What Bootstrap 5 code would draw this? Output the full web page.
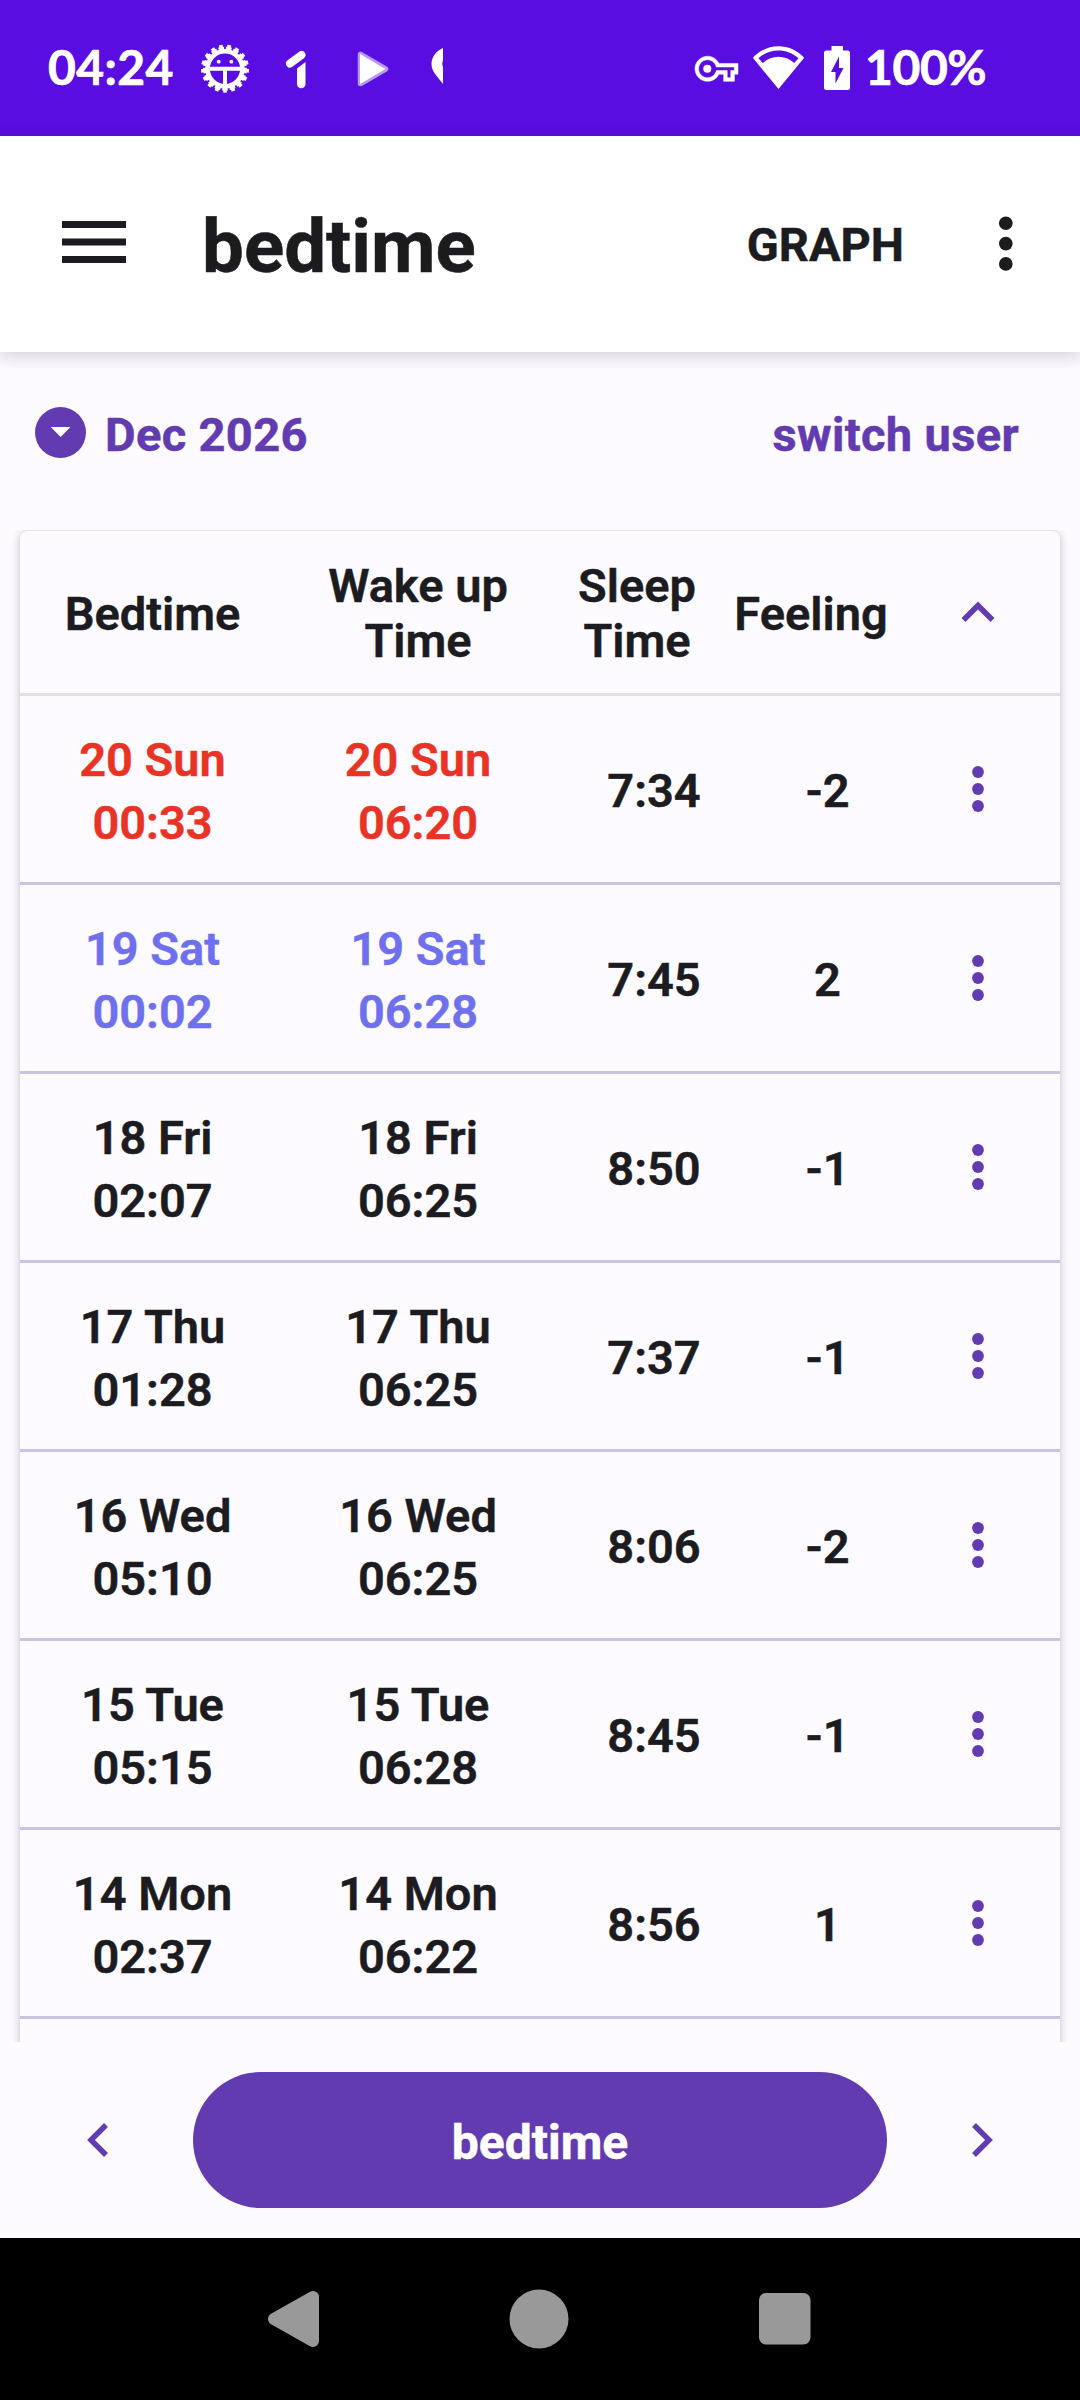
<!DOCTYPE html>
<html lang="en">
<head>
<meta charset="utf-8">
<meta name="viewport" content="width=device-width, initial-scale=1">
<title>bedtime</title>
<link href="https://cdn.jsdelivr.net/npm/bootstrap@5.3.0/dist/css/bootstrap.min.css" rel="stylesheet">
<style>
  :root { --violet: #613baf; --paper: #fdfbff; --ink: #1c1b1f; }
  body { font-family: Roboto, "Noto Sans", sans-serif; font-weight: 650; font-size: 47px; color: var(--ink); background: var(--paper); -webkit-text-stroke: .5px currentColor; }
  .screen { width: 1080px; height: 2400px; }
  svg { display: block; flex: none; }
  .status { height: 136px; background: #590de0; font-family: Lato, sans-serif; font-weight: 700; font-size: 48px; line-height: 134px; -webkit-text-stroke: .7px #fff; }
  .clock { padding-left: 48px; width: 186px; letter-spacing: .4px; }
  .level { width: 216px; padding-left: 1px; letter-spacing: -.4px; }
  .appbar { height: 216px; box-shadow: 0 4px 16px rgba(40, 30, 50, .2); z-index: 2; }
  .app-title { font-size: 74.5px; font-weight: 700; line-height: 84px; padding-left: 76px; padding-top: 6px; }
  .graph-link { font-size: 47px; font-weight: 700; color: var(--ink); padding: 2px 95px 0 0; }
  .filters { height: 178px; padding: 54px 61px 0 35px; color: var(--violet); font-size: 47px; font-weight: 700; line-height: 58px; letter-spacing: .35px; }
  .filters a, .pager a { color: inherit; }
  .viewport { height: 1512px; padding: 0 20px; }
  .log { border-radius: 8px 8px 0 0; background: var(--paper); height: 1560px; border-top: 1px solid #e6e4e8; box-shadow: 0 2px 9px rgba(30, 20, 40, .28); }
  .log table { table-layout: fixed; width: 1040px; color: var(--ink); }
  .log th { height: 163px; padding: 3px 0 0; line-height: 55px; border-bottom: 3px solid #e2e0e4; font-weight: 650; vertical-align: middle; }
  .log th:nth-child(4) { padding-right: 2px; }
  .log td { height: 189px; padding: 4px 0 0; line-height: 63px; border-bottom: 3px solid #cbc3e2; vertical-align: middle; }
  .log td:nth-child(3) { padding-left: 34px; }
  .log td:nth-child(4) { padding-left: 31px; }
  .log td:last-child, .log th:last-child { padding: 0 5px 0 0; }
  .log tr.sun { --day: #e93325; }
  .log tr.sat { --day: #6f70ee; }
  .log td:nth-child(-n+2) { color: var(--day, var(--ink)); }
  .pager { height: 196px; color: var(--violet); background: var(--paper); padding: 0 87px; z-index: 1; }
  .pill { width: 694px; height: 136px; padding: 5px 0 0; background: var(--violet); color: #fff; font-size: 48px; font-weight: 700; }
  .pill:hover { background: var(--violet); color: #fff; }
  .sysnav { height: 162px; background: #000; padding: 0 269px 0 267px; }
</style>
</head>
<body>
<svg width="0" height="0" class="position-absolute">
  <symbol id="kebab" viewBox="0 0 12 46"><circle cx="6" cy="6" r="5.9"/><circle cx="6" cy="23" r="5.9"/><circle cx="6" cy="40" r="5.9"/></symbol>
</svg>
<div class="screen d-flex flex-column overflow-hidden">
  <header class="status d-flex text-white flex-shrink-0">
    <span class="clock">04:24</span>
    <svg width="280" height="136" viewBox="186 0 280 136" fill="#fff">
      <g transform="translate(225 68.7)" fill="none" stroke="#fff">
        <circle r="17.4" stroke-width="4.6"/>
        <circle r="20.500" stroke-width="3" pathLength="34" stroke-dasharray="1.500 .5" stroke-dashoffset=".75" transform="rotate(90)"/>
        <circle r="22.500" stroke-width="3" pathLength="34" stroke-dasharray=".9 1.100" stroke-dashoffset=".45" transform="rotate(90)"/>
        <path d="M-17 0H17M0 0V17" stroke-width="4"/>
      </g>
      <circle cx="218.7" cy="61.7" r="1.9"/><circle cx="231.3" cy="61.7" r="1.9"/>
      <path d="M290 63.500 301.500 55" stroke="#fff" stroke-width="8" stroke-linecap="round"/>
      <path d="M297 68.5 305.5 62V84a4.2 4.2 0 0 1-8.5 0Z"/>
      <path d="M360.5 54.5V83.5L385.5 69Z" fill="#b899f3" stroke="#b899f3" stroke-width="5.5" stroke-linejoin="round"/>
      <path d="M360 54V84L385.5 69Z"/>
      <path d="M443 48C436 51 431.5 57 431.5 64C431.5 71 436 75 443 84V67Q441.5 63.500 443 60Z"/>
    </svg>
    <svg class="ms-auto" width="172" height="136" viewBox="692 0 172 136" fill="#fff">
      <path transform="translate(695 47.300) scale(1.79)" stroke="#fff" stroke-width=".3" d="M22 19h-6v-4h-2.680c-1.140 2.420-3.600 4-6.320 4-3.860 0-7-3.140-7-7s3.140-7 7-7c2.720 0 5.170 1.580 6.320 4H24v6h-2v4zm-4-2h2v-4h2v-2H11.940l-.23-.67C11.010 8.340 9.110 7 7 7c-2.760 0-5 2.240-5 5s2.240 5 5 5c2.110 0 4.010-1.340 4.710-3.330l.23-.67H18v4z"/>
      <circle cx="707.300" cy="68.800" r="4"/>
      <path fill-rule="evenodd" d="M752.800 57.800C767 42.500 790 42.500 804.200 57.800L778.500 89ZM758.500 58.200 762.800 63C772 54.800 785 54.800 794.200 63L798.500 58.200C787 47.800 770 47.800 758.500 58.200Z"/>
      <path fill-rule="evenodd" d="M831.500 46H843V50.500H847.500Q850 50.500 850 53V87.500Q850 90 847.500 90H826.500Q824 90 824 87.500V53Q824 50.500 826.500 50.500H831.500ZM839 56.500 831 72H835.500V83.500L843.500 68H839Z"/>
    </svg>
    <span class="level">100%</span>
  </header>

  <nav class="appbar bg-white d-flex align-items-center flex-shrink-0 position-relative">
    <svg width="126" height="60" viewBox="0 0 126 60" fill="#1c1b1f"><path d="M62 7H126V14H62ZM62 24.500H126V31.500H62ZM62 42H126V49H62Z"/></svg>
    <span class="app-title">bedtime</span>
    <a class="graph-link ms-auto text-decoration-none" href="#">GRAPH</a>
    <svg width="81" height="56" viewBox="0 0 81 56" fill="#1c1b1f"><circle cx="6.800" cy="7.300" r="6.800"/><circle cx="6.800" cy="27.600" r="6.800"/><circle cx="6.800" cy="47.900" r="6.800"/></svg>
  </nav>

  <section class="filters d-flex align-items-start justify-content-between flex-shrink-0">
    <a href="#" class="d-flex text-decoration-none">
      <svg width="70" height="54" viewBox="0 0 70 54"><circle cx="25.500" cy="26.500" r="25.500" fill="#613baf"/><path d="M15.800 21H35.500L25.600 31Z" fill="#fff"/></svg>Dec 2026</a>
    <a href="#" class="text-decoration-none">switch user</a>
  </section>

  <main class="viewport overflow-hidden flex-shrink-0">
    <div class="log">
      <table class="text-center">
        <colgroup><col style="width:265px"><col style="width:266px"><col style="width:172px"><col style="width:178px"><col style="width:159px"></colgroup>
        <thead><tr><th>Bedtime</th><th>Wake up<br>Time</th><th>Sleep<br>Time</th><th>Feeling</th><th><svg class="mx-auto" width="34" height="22" viewBox="0 0 34 22" fill="none" stroke="#613baf" stroke-width="5.500"><path d="M2.500 19 17 4.500 31.500 19"/></svg></th></tr></thead>
        <tbody>
          <tr class="sun"><td>20 Sun<br>00:33</td><td>20 Sun<br>06:20</td><td>7:34</td><td>-2</td><td><svg class="mx-auto" width="12" height="46" fill="#613baf"><use href="#kebab"/></svg></td></tr>
          <tr class="sat"><td>19 Sat<br>00:02</td><td>19 Sat<br>06:28</td><td>7:45</td><td>2</td><td><svg class="mx-auto" width="12" height="46" fill="#613baf"><use href="#kebab"/></svg></td></tr>
          <tr><td>18 Fri<br>02:07</td><td>18 Fri<br>06:25</td><td>8:50</td><td>-1</td><td><svg class="mx-auto" width="12" height="46" fill="#613baf"><use href="#kebab"/></svg></td></tr>
          <tr><td>17 Thu<br>01:28</td><td>17 Thu<br>06:25</td><td>7:37</td><td>-1</td><td><svg class="mx-auto" width="12" height="46" fill="#613baf"><use href="#kebab"/></svg></td></tr>
          <tr><td>16 Wed<br>05:10</td><td>16 Wed<br>06:25</td><td>8:06</td><td>-2</td><td><svg class="mx-auto" width="12" height="46" fill="#613baf"><use href="#kebab"/></svg></td></tr>
          <tr><td>15 Tue<br>05:15</td><td>15 Tue<br>06:28</td><td>8:45</td><td>-1</td><td><svg class="mx-auto" width="12" height="46" fill="#613baf"><use href="#kebab"/></svg></td></tr>
          <tr><td>14 Mon<br>02:37</td><td>14 Mon<br>06:22</td><td>8:56</td><td>1</td><td><svg class="mx-auto" width="12" height="46" fill="#613baf"><use href="#kebab"/></svg></td></tr>
        </tbody>
      </table>
    </div>
  </main>

  <footer class="pager d-flex align-items-center justify-content-between flex-shrink-0">
    <a href="#"><svg width="21" height="34" viewBox="0 0 21 34" fill="none" stroke="#613baf" stroke-width="5.500"><path d="M19 2 4 17 19 32"/></svg></a>
    <button class="btn pill rounded-pill border-0">bedtime</button>
    <a href="#"><svg width="21" height="34" viewBox="0 0 21 34" fill="none" stroke="#613baf" stroke-width="5.500"><path d="M2 2 17 17 2 32"/></svg></a>
  </footer>

  <div class="sysnav d-flex align-items-center justify-content-between flex-shrink-0">
    <svg width="52" height="60" viewBox="0 0 52 60" fill="#999" stroke="#999" stroke-width="12" stroke-linejoin="round"><path d="M46 8V52L7 30Z"/></svg>
    <svg width="60" height="60" fill="#999"><circle cx="30" cy="30" r="29.500"/></svg>
    <svg width="52" height="52" fill="#999"><rect width="51.500" height="51.500" rx="7"/></svg>
  </div>
</div>
<script src="https://cdn.jsdelivr.net/npm/bootstrap@5.3.0/dist/js/bootstrap.bundle.min.js"></script>
</body>
</html>
